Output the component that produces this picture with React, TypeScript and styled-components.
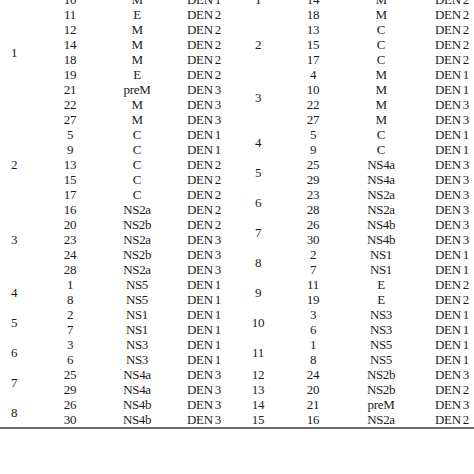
import styled, { createGlobalStyle } from 'styled-components'

type Entry = [number, string, string] | null
type Group = { label: string; rows: Entry[] }

const leftGroups: Group[] = [
  {
    label: '1',
    rows: [
      null,
      [10, 'M', 'DEN 1'],
      [11, 'E', 'DEN 2'],
      [12, 'M', 'DEN 2'],
      [14, 'M', 'DEN 2'],
      [18, 'M', 'DEN 2'],
      [19, 'E', 'DEN 2'],
      [21, 'preM', 'DEN 3'],
      [22, 'M', 'DEN 3'],
      [27, 'M', 'DEN 3'],
    ],
  },
  {
    label: '2',
    rows: [
      [5, 'C', 'DEN 1'],
      [9, 'C', 'DEN 1'],
      [13, 'C', 'DEN 2'],
      [15, 'C', 'DEN 2'],
      [17, 'C', 'DEN 2'],
    ],
  },
  {
    label: '3',
    rows: [
      [16, 'NS2a', 'DEN 2'],
      [20, 'NS2b', 'DEN 2'],
      [23, 'NS2a', 'DEN 3'],
      [24, 'NS2b', 'DEN 3'],
      [28, 'NS2a', 'DEN 3'],
    ],
  },
  { label: '4', rows: [[1, 'NS5', 'DEN 1'], [8, 'NS5', 'DEN 1']] },
  { label: '5', rows: [[2, 'NS1', 'DEN 1'], [7, 'NS1', 'DEN 1']] },
  { label: '6', rows: [[3, 'NS3', 'DEN 1'], [6, 'NS3', 'DEN 1']] },
  { label: '7', rows: [[25, 'NS4a', 'DEN 3'], [29, 'NS4a', 'DEN 3']] },
  { label: '8', rows: [[26, 'NS4b', 'DEN 3'], [30, 'NS4b', 'DEN 3']] },
]

const rightGroups: Group[] = [
  { label: '1', rows: [null, [14, 'M', 'DEN 2'], [18, 'M', 'DEN 2']] },
  { label: '2', rows: [[13, 'C', 'DEN 2'], [15, 'C', 'DEN 2'], [17, 'C', 'DEN 2']] },
  {
    label: '3',
    rows: [
      [4, 'M', 'DEN 1'],
      [10, 'M', 'DEN 1'],
      [22, 'M', 'DEN 3'],
      [27, 'M', 'DEN 3'],
    ],
  },
  { label: '4', rows: [[5, 'C', 'DEN 1'], [9, 'C', 'DEN 1']] },
  { label: '5', rows: [[25, 'NS4a', 'DEN 3'], [29, 'NS4a', 'DEN 3']] },
  { label: '6', rows: [[23, 'NS2a', 'DEN 3'], [28, 'NS2a', 'DEN 3']] },
  { label: '7', rows: [[26, 'NS4b', 'DEN 3'], [30, 'NS4b', 'DEN 3']] },
  { label: '8', rows: [[2, 'NS1', 'DEN 1'], [7, 'NS1', 'DEN 1']] },
  { label: '9', rows: [[11, 'E', 'DEN 2'], [19, 'E', 'DEN 2']] },
  { label: '10', rows: [[3, 'NS3', 'DEN 1'], [6, 'NS3', 'DEN 1']] },
  { label: '11', rows: [[1, 'NS5', 'DEN 1'], [8, 'NS5', 'DEN 1']] },
  { label: '12', rows: [[24, 'NS2b', 'DEN 3']] },
  { label: '13', rows: [[20, 'NS2b', 'DEN 2']] },
  { label: '14', rows: [[21, 'preM', 'DEN 3']] },
  { label: '15', rows: [[16, 'NS2a', 'DEN 2']] },
]

function Half({ groups, cols }: { groups: Group[]; cols: string }) {
  return (
    <HalfCol>
      {groups.map((g) => (
        <GroupBlock key={g.label} $cols={cols}>
          <GroupLabel>{g.label}</GroupLabel>
          <Rows>
            {g.rows.map((r, i) =>
              r ? (
                <Row key={i}>
                  <Cell>{r[0]}</Cell>
                  <Cell>{r[1]}</Cell>
                  <Cell>{r[2]}</Cell>
                </Row>
              ) : (
                <Row key={i} />
              )
            )}
          </Rows>
        </GroupBlock>
      ))}
    </HalfCol>
  )
}

export default function App() {
  return (
    <>
      <GlobalStyle />
      <Page>
        <Table>
          <Halves>
            <Half groups={leftGroups} cols="28px 84px 50px 84px" />
            <Half groups={rightGroups} cols="24px 86px 50px 92px" />
          </Halves>
          <Rule />
        </Table>
      </Page>
    </>
  )
}

const GlobalStyle = createGlobalStyle`
  html, body {
    margin: 0;
    padding: 0;
    background: #ffffff;
  }
`

const Page = styled.div`
  width: 474px;
  height: 474px;
  overflow: hidden;
  background: #ffffff;
  font-family: 'Liberation Serif', 'Times New Roman', serif;
  font-size: 13px;
  letter-spacing: -0.35px;
  word-spacing: -0.8px;
  color: #1c1c1c;
`

const Table = styled.div`
  margin-top: -23px;
  width: 498px;
`

const Halves = styled.div`
  display: flex;
`

const HalfCol = styled.div`
  display: flex;
  flex-direction: column;
`

const GroupBlock = styled.div<{ $cols: string }>`
  display: grid;
  grid-template-columns: ${(p) => p.$cols};
  & > div:last-child {
    grid-column: 2 / -1;
  }
  & > div:last-child > div {
    grid-template-columns: ${(p) => p.$cols.split(' ').slice(1).join(' ')};
  }
`

const GroupLabel = styled.div`
  display: flex;
  align-items: center;
  justify-content: center;
  line-height: 15px;
`

const Rows = styled.div`
  display: flex;
  flex-direction: column;
`

const Row = styled.div`
  display: grid;
  height: 15px;
  line-height: 15px;
`

const Cell = styled.div`
  text-align: center;
  white-space: nowrap;
`

const Rule = styled.div`
  width: 474px;
  border-top: 2px solid #6c6c6c;
`
